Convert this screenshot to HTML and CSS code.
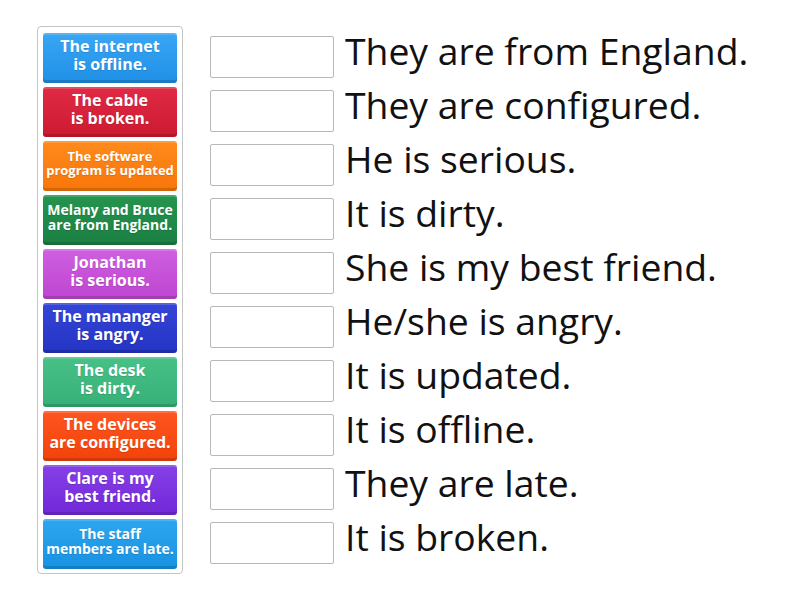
FILE: index.html
```html
<!DOCTYPE html>
<html lang="en">
<head>
<meta charset="utf-8">
<title>Match up</title>
<link rel="stylesheet" href="styles.css">
</head>
<body>
<div class="page">
  <div class="panel">
    <div class="tile c1 fs-lg">The internet<br>is offline.</div>
    <div class="tile c2 fs-lg">The cable<br>is broken.</div>
    <div class="tile c3 fs-xs">The software<br>program is updated</div>
    <div class="tile c4 fs-sm">Melany and Bruce<br>are from England.</div>
    <div class="tile c5 fs-lg">Jonathan<br>is serious.</div>
    <div class="tile c6 fs-lg">The mananger<br>is angry.</div>
    <div class="tile c7 fs-lg">The desk<br>is dirty.</div>
    <div class="tile c8 fs-md">The devices<br>are configured.</div>
    <div class="tile c9 fs-lg">Clare is my<br>best friend.</div>
    <div class="tile c10 fs-sm">The staff<br>members are late.</div>
  </div>
  <div class="answers">
    <div class="row"><div class="slot"></div><span class="phrase">They are from England.</span></div>
    <div class="row"><div class="slot"></div><span class="phrase">They are configured.</span></div>
    <div class="row"><div class="slot"></div><span class="phrase">He is serious.</span></div>
    <div class="row"><div class="slot"></div><span class="phrase">It is dirty.</span></div>
    <div class="row"><div class="slot"></div><span class="phrase">She is my best friend.</span></div>
    <div class="row"><div class="slot"></div><span class="phrase">He/she is angry.</span></div>
    <div class="row"><div class="slot"></div><span class="phrase">It is updated.</span></div>
    <div class="row"><div class="slot"></div><span class="phrase">It is offline.</span></div>
    <div class="row"><div class="slot"></div><span class="phrase">They are late.</span></div>
    <div class="row"><div class="slot"></div><span class="phrase">It is broken.</span></div>
  </div>
</div>
</body>
</html>
```
FILE: styles.css
```css
html, body {
  margin: 0;
  padding: 0;
  background: #ffffff;
}

body {
  font-family: "Open Sans", "Noto Sans", sans-serif;
}

.page {
  display: flex;
  align-items: flex-start;
  padding: 26px 0 0 37px;
}

.panel {
  box-sizing: border-box;
  width: 146px;
  height: 548px;
  border: 1px solid #c4c4c4;
  border-radius: 4px;
  padding: 6px 5px 3px 5px;
  display: flex;
  flex-direction: column;
  gap: 4px;
}

.tile {
  box-sizing: border-box;
  height: 50px;
  border-radius: 3px;
  color: #ffffff;
  font-weight: 700;
  text-align: center;
  display: flex;
  align-items: center;
  justify-content: center;
  padding-bottom: 6px;
  box-shadow: inset 0 -3px 0 rgba(0, 0, 0, 0.14), inset 0 2px 0 rgba(255, 255, 255, 0.16);
  text-shadow: 0 1px 1px rgba(0, 0, 0, 0.12);
  white-space: nowrap;
}

.fs-lg { font-size: 16px; line-height: 18px; }
.fs-md { font-size: 16px; line-height: 18px; }
.fs-sm { font-size: 14px; line-height: 15px; }
.fs-xs { font-size: 13px; line-height: 14px; }

.c1  { background: linear-gradient(#3aa6f5, #1f90e6); }
.c2  { background: linear-gradient(#e12a44, #cc1a32); }
.c3  { background: linear-gradient(#ff8a1c, #f7760a); }
.c4  { background: linear-gradient(#25954f, #1b7f43); }
.c5  { background: linear-gradient(#cf5fe0, #be45d1); }
.c6  { background: linear-gradient(#3445d8, #2434c4); }
.c7  { background: linear-gradient(#48c187, #36b077); }
.c8  { background: linear-gradient(#ff5520, #f2420a); }
.c9  { background: linear-gradient(#8540e6, #7128d8); }
.c10 { background: linear-gradient(#2ea6ee, #1892e2); }

.answers {
  margin-left: 27px;
  margin-top: 4px;
  display: flex;
  flex-direction: column;
}

.row {
  height: 54px;
  display: flex;
  align-items: center;
}

.slot {
  box-sizing: border-box;
  width: 124px;
  height: 42px;
  border: 1px solid #b8b8b8;
  border-radius: 2px;
  background: #ffffff;
  flex-shrink: 0;
}

.phrase {
  margin-left: 11px;
  font-size: 37.3px;
  line-height: 37px;
  padding-bottom: 13px;
  color: #111111;
  white-space: nowrap;
}
```
